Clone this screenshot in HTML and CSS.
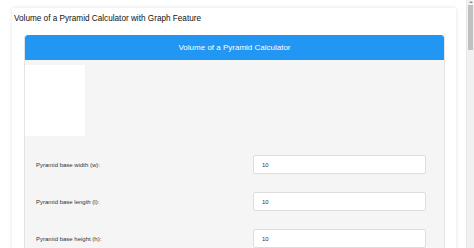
FILE: index.html
```html
<!DOCTYPE html>
<html lang="en">
<head>
<meta charset="utf-8">
<title>Volume of a Pyramid Calculator with Graph Feature</title>
<link rel="stylesheet" href="styles.css">
</head>
<body>
<div class="page">
  <div class="title">Volume of a Pyramid Calculator with Graph Feature</div>
  <div class="card">
    <div class="card-header">Volume of a Pyramid Calculator</div>
    <div class="card-body">
      <div class="graph"></div>
      <div class="rows">
        <div class="row">
          <label class="label" for="w">Pyramid base width (w):</label>
          <input class="field" id="w" type="text" value="10">
        </div>
        <div class="row">
          <label class="label" for="l">Pyramid base length (l):</label>
          <input class="field" id="l" type="text" value="10">
        </div>
        <div class="row">
          <label class="label" for="h">Pyramid base height (h):</label>
          <input class="field" id="h" type="text" value="10">
        </div>
        <div class="row">
          <button class="calc" type="button">Calculate</button>
        </div>
        <div class="row">
          <span class="label">Volume (V):</span>
          <span class="result">333.33</span>
        </div>
      </div>
      <div class="spacer"></div>
    </div>
  </div>
</div>
<div class="scrollbar"><div class="scroll-arrow"></div><div class="scroll-thumb"></div></div>
</body>
</html>
```
FILE: styles.css
```css
html {
  overflow: hidden;
}
body {
  margin: 0;
  padding: 8px 18px 20px 12px;
  background: #ffffff;
  font-family: "Liberation Sans", Arial, sans-serif;
}
.page {
  background: #ffffff;
  box-shadow: 0 0 4px rgba(0, 0, 0, 0.12);
  padding: 6px 12px 14px 2px;
}
.title {
  margin: 0;
  font-size: 8.2px;
  line-height: 10px;
  font-weight: normal;
  color: #111;
}
.card {
  margin: 11px -1px 0 10px;
  border: 1px solid #e3e3e3;
  border-top: 0;
  border-radius: 3px;
  overflow: hidden;
  background: #f5f5f5;
}
.card-header {
  background: #2196f3;
  color: #ffffff;
  height: 25px;
  line-height: 25px;
  text-align: center;
  font-size: 8px;
  border-radius: 3px 3px 0 0;
}
.card-body {
  padding-top: 5px;
}
.graph {
  width: 60px;
  height: 71px;
  background: #ffffff;
}
.rows {
  display: flex;
  flex-direction: column;
  gap: 18px;
  margin-top: 19px;
  padding: 0 18px 0 11px;
}
.row {
  display: flex;
  align-items: center;
  height: 19px;
}
.label {
  flex: 1;
  font-size: 6px;
  color: #333;
}
.field {
  box-sizing: border-box;
  width: 173px;
  height: 19px;
  margin: 0;
  border: 1px solid #dddddd;
  border-radius: 2px;
  background: #ffffff;
  padding: 0 0 0 8px;
  font-family: "Liberation Sans", Arial, sans-serif;
  font-size: 6px;
  color: #333;
  outline: none;
}
.calc {
  border: 0;
  border-radius: 2px;
  background: #2196f3;
  color: #fff;
  font-family: "Liberation Sans", Arial, sans-serif;
  font-size: 6px;
  height: 19px;
  padding: 0 12px;
}
.result {
  width: 173px;
  font-size: 6px;
  color: #333;
}
.spacer {
  height: 950px;
}
.scrollbar {
  position: fixed;
  top: 0;
  right: 0;
  bottom: 0;
  width: 7px;
  background: #f1f1f1;
  border-left: 1px solid #e8e8e8;
}
.scroll-arrow {
  width: 0;
  height: 0;
  margin: 1px auto 2px;
  border-left: 2px solid transparent;
  border-right: 2px solid transparent;
  border-bottom: 2px solid #8a8a8a;
}
.scroll-thumb {
  margin: 0 1px;
  height: 45px;
  background: #c1c1c1;
}
```
